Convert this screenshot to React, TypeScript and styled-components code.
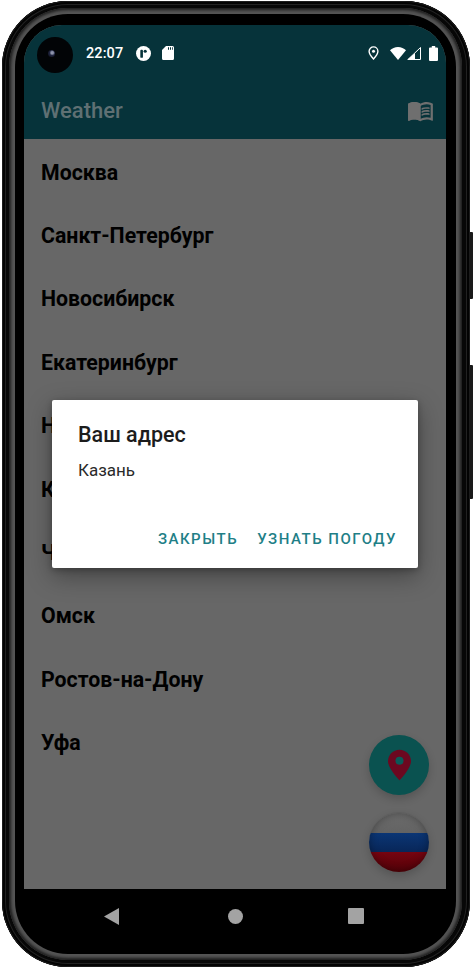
import React from "react";
import styled, { createGlobalStyle } from "styled-components";

const GlobalStyle = createGlobalStyle`
  html, body {
    margin: 0;
    padding: 0;
    background: #fff;
    font-family: Roboto, "Liberation Sans", sans-serif;
  }
`;

const Page = styled.div`
  width: 474px;
  height: 968px;
  box-sizing: border-box;
  padding: 1px 4px 1px 2px;
  overflow: hidden;
`;

const Device = styled.div`
  position: relative;
  height: 100%;
  box-sizing: border-box;
  padding: 7px 8px 7px 7px;
  border-radius: 66px;
  background: #070707;
  box-shadow: inset 0 0 0 1px #1c1c1c, inset 0 0 0 3px #030303, inset 0 0 0 4px #222;
`;

const SideButton = styled.div<{ $top: number; $height: number }>`
  position: absolute;
  right: -3px;
  top: ${(props) => props.$top}px;
  width: 3px;
  height: ${(props) => props.$height}px;
  background: #1a1a1a;
  border-radius: 0 1px 1px 0;
`;

const Ring = styled.div`
  height: 100%;
  box-sizing: border-box;
  padding: 6px;
  border-radius: 59px;
  background: #545454;
  box-shadow: inset 0 0 3px 2px #1c1c1c;
`;

const Bezel = styled.div`
  height: 100%;
  box-sizing: border-box;
  padding: 11px 10px 0 9px;
  border-radius: 53px;
  background: #000;
  display: flex;
  flex-direction: column;
`;

const Screen = styled.div`
  position: relative;
  height: 864px;
  flex-shrink: 0;
  background: #676767;
  border-radius: 38px 38px 0 0;
  overflow: hidden;
  display: flex;
  flex-direction: column;
`;

const Header = styled.div`
  background: #06333a;
  flex-shrink: 0;
`;

const StatusBar = styled.div`
  position: relative;
  height: 56px;
  display: flex;
  align-items: center;
  padding: 0 8px 0 62px;
  color: #fff;
`;

const Camera = styled.div`
  position: absolute;
  left: 13px;
  top: 12px;
  width: 36px;
  height: 36px;
  border-radius: 50%;
  background: #020406;
  display: flex;
  align-items: center;
  justify-content: center;
`;

const Lens = styled.div`
  width: 7px;
  height: 7px;
  margin: 0 7px 3px 0;
  border-radius: 50%;
  background: radial-gradient(circle at 60% 40%, #8d93ab 0 20%, #20253f 45%, #0a0c18 100%);
`;

const Clock = styled.span`
  font-size: 14.5px;
  font-weight: 500;
  letter-spacing: 0.1px;
  width: 49px;
`;

const StatusGroup = styled.div`
  display: flex;
  align-items: center;
`;

const Spacer = styled.div`
  flex: 1;
`;

const Toolbar = styled.div`
  height: 58px;
  display: flex;
  align-items: center;
  justify-content: space-between;
  padding: 0 12px 0 17px;
`;

const AppTitle = styled.div`
  font-size: 22px;
  font-weight: 500;
  color: #5f7073;
`;

const CityList = styled.div`
  padding-top: 1.5px;
`;

const CityRow = styled.div`
  height: 63.4px;
  display: flex;
  align-items: center;
  padding-left: 17px;
  font-size: 21.3px;
  font-weight: 700;
  color: #000;
`;

const Dialog = styled.div`
  position: absolute;
  left: 28px;
  top: 375px;
  width: 366px;
  height: 168px;
  box-sizing: border-box;
  padding: 23px 21px 0 26px;
  background: #fff;
  border-radius: 2px;
  box-shadow: 0 8px 24px rgba(0, 0, 0, 0.35), 0 2px 6px rgba(0, 0, 0, 0.25);
  display: flex;
  flex-direction: column;
`;

const DialogTitle = styled.div`
  font-size: 21.5px;
  font-weight: 500;
  line-height: 24px;
  color: #1c1c1c;
`;

const DialogBody = styled.div`
  margin-top: 12px;
  font-size: 17px;
  line-height: 22px;
  color: #2a2a2a;
`;

const DialogActions = styled.div`
  margin-top: auto;
  height: 39px;
  display: flex;
  justify-content: flex-end;
  align-items: flex-start;
  gap: 19px;
`;

const DialogButton = styled.span`
  font-size: 15px;
  font-weight: 500;
  line-height: 20px;
  letter-spacing: 1.5px;
  color: #1f7f87;
`;

const FabColumn = styled.div`
  position: absolute;
  right: 17px;
  bottom: 17px;
  display: flex;
  flex-direction: column;
  gap: 17px;
`;

const Fab = styled.div`
  width: 60px;
  height: 60px;
  border-radius: 50%;
  background: #0a5250;
  box-shadow: 0 4px 8px rgba(0, 0, 0, 0.18);
  display: flex;
  align-items: center;
  justify-content: center;
`;

const FlagFab = styled.div`
  width: 60px;
  height: 60px;
  box-sizing: border-box;
  border-radius: 50%;
  border-top: 1px solid #5e5e5e;
  box-shadow: 0 4px 8px rgba(0, 0, 0, 0.18), inset 0 0 8px rgba(0, 0, 0, 0.35);
  background: linear-gradient(
    to bottom,
    #6c6c6c 0,
    #636363 33.3%,
    #0b3675 33.3%,
    #082658 66.6%,
    #760410 66.6%,
    #520208 100%
  );
`;

const NavBar = styled.div`
  flex: 1;
  display: flex;
  align-items: center;
  justify-content: space-between;
  padding: 0 82px 11px 80px;
`;

const NavBack = styled.svg`
  display: block;
`;

const NavHome = styled.div`
  width: 15px;
  height: 15px;
  margin-left: 3px;
  border-radius: 50%;
  background: #a3a3a3;
`;

const NavRecent = styled.div`
  width: 16px;
  height: 16px;
  border-radius: 1px;
  background: #a3a3a3;
`;

const cities = [
  "Москва",
  "Санкт-Петербург",
  "Новосибирск",
  "Екатеринбург",
  "Нижний Новгород",
  "Казань",
  "Челябинск",
  "Омск",
  "Ростов-на-Дону",
  "Уфа",
];

const NoticeIcon = () => (
  <svg width="15" height="15" viewBox="0 0 16 16" style={{ marginRight: 11, marginLeft: 1 }}>
    <circle cx="8" cy="8" r="8" fill="#fff" />
    <rect x="4.600" y="4" width="2.800" height="8.600" rx="1" fill="#06333a" />
    <circle cx="9.800" cy="5.600" r="1.700" fill="#06333a" />
  </svg>
);

const SdIcon = () => (
  <svg width="12" height="14" viewBox="0 0 12 14">
    <path
      d="M4 0h6.500A1.500 1.500 0 0 1 12 1.500v11a1.500 1.500 0 0 1-1.500 1.500h-9A1.500 1.500 0 0 1 0 12.500V4z"
      fill="#fff"
    />
    <path d="M6 1.300h1v2.500H6zM8 1.300h1v2.500H8zM10 1.300h.8v2.500H10z" fill="#06333a" />
  </svg>
);

const PlaceIcon = () => (
  <svg width="11" height="14" viewBox="0 0 11 14" style={{ marginRight: 11 }}>
    <path
      d="M5.500.9a4.400 4.400 0 0 0-4.400 4.400c0 3 4.400 7.700 4.400 7.700s4.400-4.700 4.400-7.700A4.400 4.400 0 0 0 5.500.9z"
      fill="none"
      stroke="#fff"
      strokeWidth="1.400"
    />
    <circle cx="5.500" cy="5.300" r="1.500" fill="#fff" />
  </svg>
);

const WifiIcon = () => (
  <svg width="16" height="13" viewBox="0 0 16 13" style={{ marginRight: 1 }}>
    <path d="M8 13 0 3.200C2 1.300 4.800 0 8 0s6 1.300 8 3.200z" fill="#fff" />
  </svg>
);

const SignalIcon = () => (
  <svg width="14" height="13" viewBox="0 0 14 13" style={{ marginRight: 8 }}>
    <path d="M13.500.5v12H1z" fill="none" stroke="#fff" strokeWidth="1" />
    <path d="M8 6v7H0z" fill="#fff" />
  </svg>
);

const BatteryIcon = () => (
  <svg width="9" height="15" viewBox="0 0 9 15">
    <path
      d="M2.800 0h3.400v1.500H8a1 1 0 0 1 1 1V14a1 1 0 0 1-1 1H1a1 1 0 0 1-1-1V2.500a1 1 0 0 1 1-1h1.800z"
      fill="#fff"
    />
  </svg>
);

const BookIcon = () => (
  <svg width="27" height="27" viewBox="0 0 24 24" fill="#6f6f6f">
    <path d="M21 5c-1.110-.35-2.330-.5-3.500-.5-1.950 0-4.050.4-5.500 1.500-1.450-1.100-3.550-1.500-5.500-1.500S2.450 4.900 1 6v14.650c0 .25.25.5.5.5.1 0 .15-.05.25-.05C3.100 20.450 5.050 20 6.500 20c1.950 0 4.050.4 5.500 1.500 1.350-.85 3.800-1.500 5.500-1.500 1.650 0 3.350.3 4.750 1.050.1.05.15.05.25.05.25 0 .5-.25.5-.5V6c-.6-.45-1.250-.75-2-1zm0 13.500c-1.100-.35-2.300-.5-3.500-.5-1.700 0-4.150.65-5.500 1.500V8c1.350-.85 3.800-1.500 5.500-1.500 1.200 0 2.400.15 3.500.5v11.500z" />
    <path d="M17.500 10.500c.88 0 1.730.09 2.500.26V9.240c-.79-.15-1.640-.24-2.500-.24-1.700 0-3.240.29-4.500.83v1.660c1.130-.64 2.700-.99 4.500-.99zM13 12.490v1.660c1.130-.64 2.700-.99 4.500-.99.88 0 1.730.09 2.500.26V11.900c-.79-.15-1.640-.24-2.500-.24-1.700 0-3.240.3-4.500.83zM17.500 14.330c-1.700 0-3.240.29-4.500.83v1.660c1.130-.64 2.700-.99 4.500-.99.88 0 1.730.09 2.500.26v-1.520c-.79-.16-1.640-.24-2.500-.24z" />
    <path d="M1 6c1.450-1.100 3.550-1.500 5.500-1.500S10.550 4.900 12 6v15.500C10.550 20.400 8.450 20 6.500 20c-1.450 0-3.400.45-4.750 1.100-.1 0-.15.05-.25.05-.25 0-.5-.25-.5-.5z" />
  </svg>
);

const MapPin = () => (
  <svg width="23" height="32" viewBox="0 0 24 32">
    <path
      d="M12 0C5.400 0 0 5.300 0 12c0 7.500 12 20 12 20s12-12.500 12-20C24 5.300 18.600 0 12 0z"
      fill="#6c0820"
    />
    <circle cx="12" cy="11.500" r="4.200" fill="#0a5a58" />
  </svg>
);

const App = () => (
  <Page>
    <GlobalStyle />
    <Device>
      <SideButton $top={231} $height={67} />
      <SideButton $top={364} $height={134} />
      <Ring>
        <Bezel>
          <Screen>
            <Header>
              <StatusBar>
                <Camera>
                  <Lens />
                </Camera>
                <Clock>22:07</Clock>
                <StatusGroup>
                  <NoticeIcon />
                  <SdIcon />
                </StatusGroup>
                <Spacer />
                <StatusGroup>
                  <PlaceIcon />
                  <WifiIcon />
                  <SignalIcon />
                  <BatteryIcon />
                </StatusGroup>
              </StatusBar>
              <Toolbar>
                <AppTitle>Weather</AppTitle>
                <BookIcon />
              </Toolbar>
            </Header>
            <CityList>
              {cities.map((city) => (
                <CityRow key={city}>{city}</CityRow>
              ))}
            </CityList>
            <Dialog>
              <DialogTitle>Ваш адрес</DialogTitle>
              <DialogBody>Казань</DialogBody>
              <DialogActions>
                <DialogButton>ЗАКРЫТЬ</DialogButton>
                <DialogButton>УЗНАТЬ ПОГОДУ</DialogButton>
              </DialogActions>
            </Dialog>
            <FabColumn>
              <Fab>
                <MapPin />
              </Fab>
              <FlagFab />
            </FabColumn>
          </Screen>
          <NavBar>
            <NavBack width="15" height="17" viewBox="0 0 15 17">
              <path d="M15 0v17L0 8.500z" fill="#a3a3a3" />
            </NavBack>
            <NavHome />
            <NavRecent />
          </NavBar>
        </Bezel>
      </Ring>
    </Device>
  </Page>
);

export default App;
